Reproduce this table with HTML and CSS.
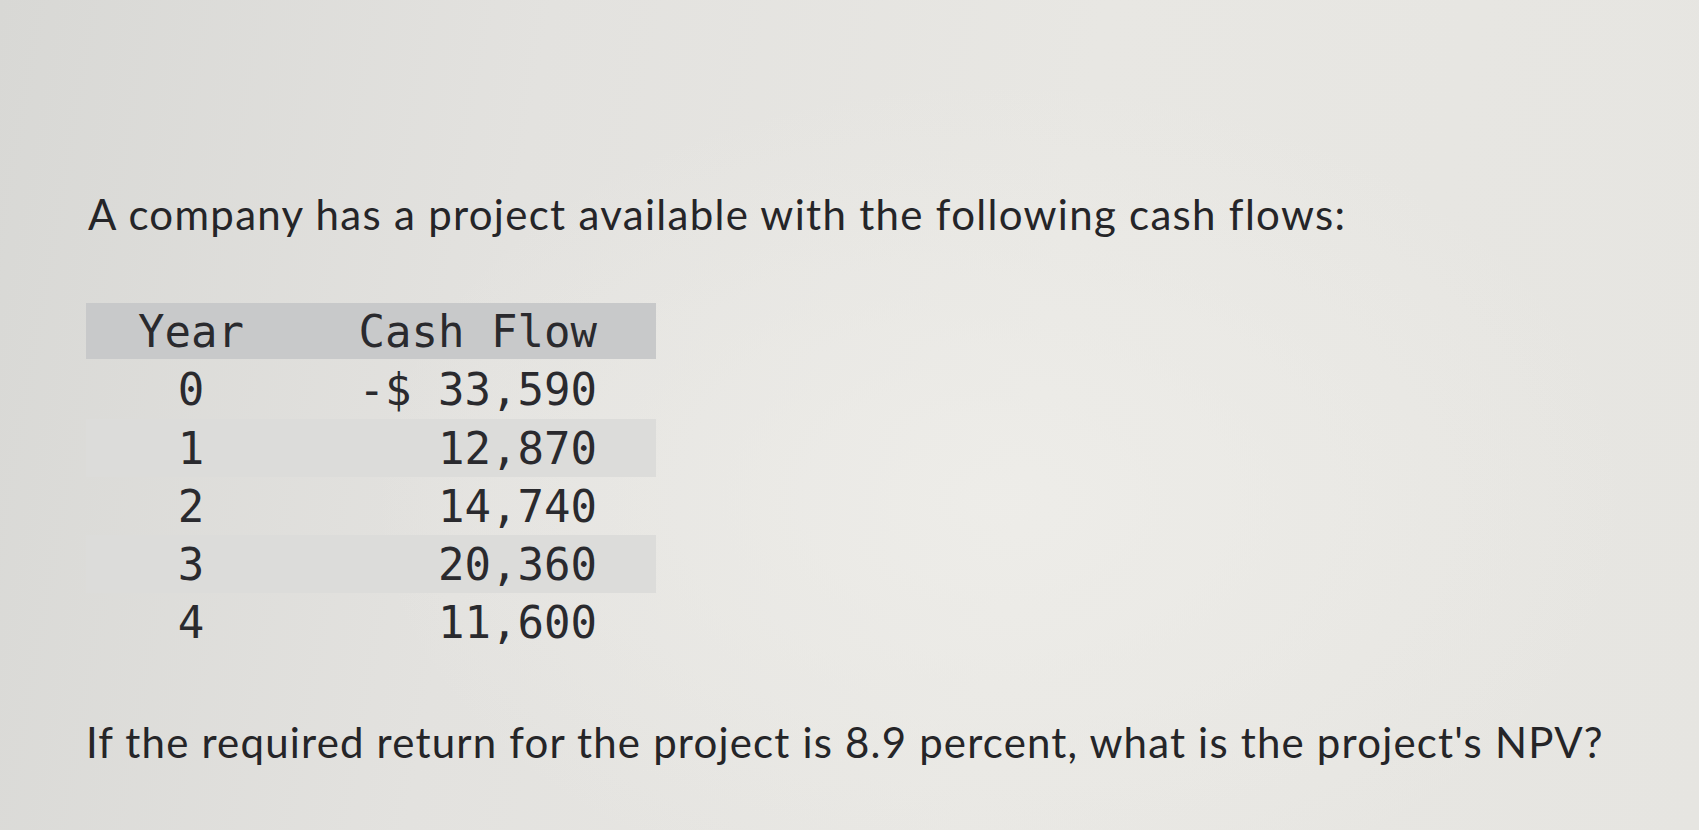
FILE: index.html
```html
<!DOCTYPE html>
<html lang="en">
<head>
<meta charset="utf-8">
<title>NPV question</title>
<link rel="stylesheet" href="styles.css">
</head>
<body>
<main class="page">
  <p class="prompt prompt-top">A company has a project available with the following cash flows:</p>
  <div class="cf-table">
    <div class="cf-row cf-head"><span class="c-year">Year</span><span class="c-cash">Cash Flow</span></div>
    <div class="cf-row cf-first"><span class="c-year">0</span><span class="c-cash">-$ 33,590</span></div>
    <div class="cf-row cf-alt"><span class="c-year">1</span><span class="c-cash">12,870</span></div>
    <div class="cf-row"><span class="c-year">2</span><span class="c-cash">14,740</span></div>
    <div class="cf-row cf-alt"><span class="c-year">3</span><span class="c-cash">20,360</span></div>
    <div class="cf-row"><span class="c-year">4</span><span class="c-cash">11,600</span></div>
  </div>
  <p class="prompt prompt-bottom">If the required return for the project is 8.9 percent, what is the project's NPV?</p>
</main>
</body>
</html>
```
FILE: styles.css
```css
html, body {
  margin: 0;
  padding: 0;
  width: 1699px;
  height: 830px;
  overflow: hidden;
}
body {
  background:
    radial-gradient(ellipse 900px 600px at 1000px 500px, rgba(238,237,233,0.9), rgba(238,237,233,0) 70%),
    linear-gradient(100deg, #d8d8d5 0%, #e3e2df 30%, #e8e7e3 60%, #e6e5e1 100%);
  color: #2c2c30;
}
.page {
  display: flex;
  flex-direction: column;
  align-items: flex-start;
  padding: 0 0 0 86px;
}
.prompt {
  margin: 0;
  font-family: Lato, "Open Sans", sans-serif;
  font-size: 42px;
  line-height: 50px;
  letter-spacing: 1.3px;
  color: #252528;
  white-space: nowrap;
}
.prompt-top {
  margin-top: 189px;
  padding-left: 2px;
}
.cf-table {
  margin-top: 64px;
  width: 570px;
  display: flex;
  flex-direction: column;
  font-family: "DejaVu Sans Mono", "Liberation Mono", monospace;
  font-size: 44px;
  color: #2a2a2e;
}
.cf-row {
  display: grid;
  grid-template-columns: 210px 1fr;
  height: 58px;
  align-items: center;
}
.cf-head {
  height: 56px;
  background: #c8c9ca;
}
.cf-first {
  height: 60px;
}
.cf-alt {
  background: #dcdcda;
}
.c-year {
  text-align: center;
}
.c-cash {
  text-align: right;
  padding-right: 59px;
}
.prompt-bottom {
  margin-top: 66px;
  letter-spacing: 1.18px;
}
```
